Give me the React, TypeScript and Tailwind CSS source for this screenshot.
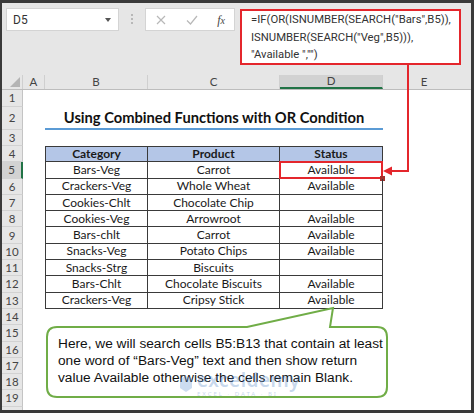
import React from 'react';

const TABLE: Record<number, [string, string, string]> = {
  5: ['Bars-Veg', 'Carrot', 'Available'],
  6: ['Crackers-Veg', 'Whole Wheat', 'Available'],
  7: ['Cookies-Chlt', 'Chocolate Chip', ''],
  8: ['Cookies-Veg', 'Arrowroot', 'Available'],
  9: ['Bars-chlt', 'Carrot', 'Available'],
  10: ['Snacks-Veg', 'Potato Chips', 'Available'],
  11: ['Snacks-Strg', 'Biscuits', ''],
  12: ['Bars-Chlt', 'Chocolate Biscuits', 'Available'],
  13: ['Crackers-Veg', 'Cripsy Stick', 'Available'],
};

const ROW_H: Record<number, string> = { 1: 'h-[17px]', 2: 'h-[23px]', 3: 'h-[16px]' };

function RowHead({ n }: { n: number }) {
  const active = n === 5;
  return (
    <div
      className={`w-[21px] shrink-0 flex items-center justify-center border-b border-[#d2d2d2] text-[11.5px] text-[#444] ${
        active ? 'bg-[#d2d2d2] border-r-2 border-r-[#217346]' : 'bg-[#e6e6e6] border-r border-r-[#c4c4c4]'
      }`}
    >
      {n <= 19 ? n : ''}
    </div>
  );
}

function TableCell({ w, first, header, selected, children }: { w: string; first?: boolean; header?: boolean; selected?: boolean; children?: React.ReactNode }) {
  return (
    <div
      className={`${w} shrink-0 relative flex items-center justify-center border-r border-b border-[#3a3a3a] ${first ? 'border-l' : ''} ${
        header ? 'bg-[#b4c6e7] border-t font-bold' : ''
      }`}
    >
      {children}
      {selected && (
        <>
          <div className="absolute -inset-[1px] border-2 border-[#e4262c]" />
          <div className="absolute -right-[3px] -bottom-[3px] w-[5px] h-[5px] bg-[#a2312d]" />
        </>
      )}
    </div>
  );
}

function SheetRow({ n }: { n: number }) {
  const h = ROW_H[n] ?? 'h-[16.3px]';
  const data = TABLE[n];
  return (
    <div className={`flex shrink-0 ${h}`}>
      <RowHead n={n} />
      <div className="w-[22px] shrink-0" />
      {n === 2 && (
        <div className="w-[338px] shrink-0 flex items-center justify-center border-b-2 border-[#5b9bd5] font-bold text-[14.7px] text-[#111]">
          Using Combined Functions with OR Condition
        </div>
      )}
      {n === 4 && (
        <>
          <TableCell w="w-[103px]" first header>Category</TableCell>
          <TableCell w="w-[132px]" header>Product</TableCell>
          <TableCell w="w-[103px]" header>Status</TableCell>
        </>
      )}
      {data && (
        <>
          <TableCell w="w-[103px]" first>{data[0]}</TableCell>
          <TableCell w="w-[132px]">{data[1]}</TableCell>
          <TableCell w="w-[103px]" selected={n === 5}>{data[2]}</TableCell>
        </>
      )}
      <div className="flex-1" />
    </div>
  );
}

function FormulaBar() {
  return (
    <div className="h-[72px] shrink-0 bg-[#e6e6e6] flex items-start pt-[5px] pl-[4px] font-['Roboto',sans-serif]">
      <div className="w-[113px] h-[23px] bg-white border border-[#d4d4d4] flex items-center justify-between pl-[6px] pr-[7px] text-[12px] text-[#333]">
        <span>D5</span>
        <span className="w-0 h-0 border-l-[3.5px] border-r-[3.5px] border-t-[4px] border-l-transparent border-r-transparent border-t-[#555]" />
      </div>
      <div className="ml-[12px] mt-[6px] flex flex-col gap-[2px]">
        <span className="w-[2px] h-[2px] rounded-full bg-[#a8a8a8]" />
        <span className="w-[2px] h-[2px] rounded-full bg-[#a8a8a8]" />
        <span className="w-[2px] h-[2px] rounded-full bg-[#a8a8a8]" />
      </div>
      <div className="ml-[12px] w-[90px] h-[23px] bg-white border border-[#d4d4d4] flex items-center justify-between pl-[10px] pr-[9px]">
        <svg width="10" height="10" viewBox="0 0 10 10">
          <path d="M1 1 L9 9 M9 1 L1 9" stroke="#b8b8b8" strokeWidth="1.2" />
        </svg>
        <svg width="12" height="10" viewBox="0 0 12 10">
          <path d="M1 5.5 L4.5 9 L11 1" stroke="#b8b8b8" strokeWidth="1.2" fill="none" />
        </svg>
        <span className="font-['Liberation_Serif',serif] italic text-[12px] text-[#444] leading-none">
          f<span className="text-[10px]">x</span>
        </span>
      </div>
      <div className="ml-[5px] mt-[1px] w-[221px] h-[56px] bg-white border-2 border-[#e4262c] pl-[9px] text-[11.3px] leading-[17.5px] text-[#333]">
        <div>=IF(OR(ISNUMBER(SEARCH("Bars",B5)),</div>
        <div>ISNUMBER(SEARCH("Veg",B5))),</div>
        <div>"Available ","")</div>
      </div>
    </div>
  );
}

function ColumnHeader() {
  const cell = 'shrink-0 flex items-center justify-center border-r border-[#cfcfcf]';
  return (
    <div className="h-[15px] shrink-0 flex bg-[#e6e6e6] border-b border-[#bdbdbd] text-[11.5px] text-[#444]">
      <div className={`w-[21px] ${cell} relative`}>
        <svg className="absolute right-[2px] bottom-[2px]" width="10" height="10" viewBox="0 0 10 10">
          <polygon points="10,0 10,10 0,10" fill="#b4b4b4" />
        </svg>
      </div>
      <div className={`w-[22px] ${cell}`}>A</div>
      <div className={`w-[103px] ${cell}`}>B</div>
      <div className={`w-[132px] ${cell}`}>C</div>
      <div className={`w-[103px] ${cell} bg-[#d2d2d2] border-b-2 border-b-[#217346]`}>D</div>
      <div className="flex-1 flex items-center justify-center pr-[6px]">E</div>
    </div>
  );
}

export default function App() {
  const rows = Array.from({ length: 20 }, (_, i) => i + 1);
  return (
    <div className="w-[474px] h-[413px] bg-[#3a3a3a] pt-[3px] pl-[2px] pr-[3px] pb-[3px] overflow-hidden">
      <div className="relative w-full h-full bg-white flex flex-col overflow-hidden font-['Lato',sans-serif] text-[12px] text-[#1a1a1a]">
        <FormulaBar />
        <ColumnHeader />
        {rows.map((n) => (
          <SheetRow key={n} n={n} />
        ))}

        {/* arrow + callout */}
        <svg className="absolute left-0 top-0 pointer-events-none" width="469" height="407">
          <path
            d="M55,324 H245 L331,305 L328,324 H375 Q385,324 385,334 V384 Q385,394 375,394 H55 Q45,394 45,384 V334 Q45,324 55,324 Z"
            fill="white"
            stroke="#70ad47"
            strokeWidth="2"
          />
          <path d="M406,62 V168 H388" stroke="#e4262c" strokeWidth="2" fill="none" />
          <polygon points="381,168 390,163.5 390,172.5" fill="#e4262c" />
        </svg>
        <div className="absolute left-[56px] top-[332px] font-['Liberation_Sans',sans-serif] text-[13.7px] leading-[17px] text-[#111] whitespace-nowrap">
          Here, we will search cells B5:B13 that contain at least
          <br />
          one word of “Bars-Veg” text and then show return
          <br />
          value Available otherwise the cells remain Blank.
        </div>

        {/* watermark */}
        <div className="absolute left-[176px] top-[368px] flex items-center gap-[3px] opacity-30 pointer-events-none">
          <svg width="16" height="18" viewBox="0 0 16 18">
            <path d="M2 4 L8 1 L14 4 V13 L8 17 L2 13 Z" fill="#5a8fd0" />
          </svg>
          <div className="flex flex-col leading-none font-['Noto_Sans',sans-serif] text-[#4a7fc4]">
            <span className="text-[19px] font-semibold tracking-[0.5px]">exceldemy</span>
            <span className="text-[6px] tracking-[2px] mt-[1px]">EXCEL · DATA · BI</span>
          </div>
        </div>
      </div>
    </div>
  );
}
